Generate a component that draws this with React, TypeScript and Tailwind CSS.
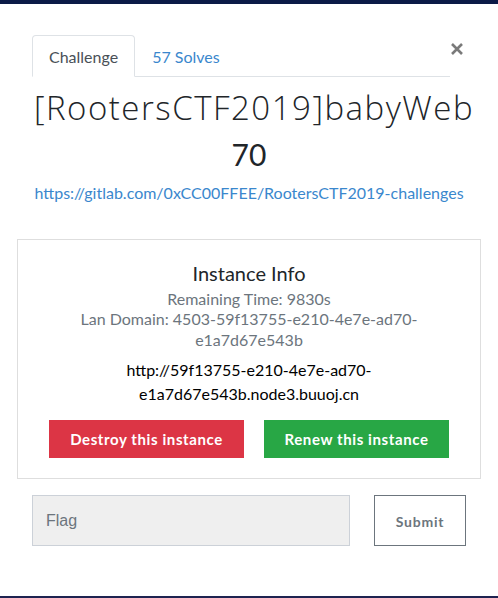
export default function App() {
  return (
    <div className="flex h-[598px] w-[498px] flex-col overflow-hidden bg-white font-['Lato',sans-serif] text-[#212529]">
      <div className="h-[4px] shrink-0 bg-[#0b1a47]" />
      <div className="flex-1 px-[32px] pt-[32px]">
        {/* tabs */}
        <div className="flex items-start">
          <div className="flex h-[41px] w-[420px] items-end border-b border-[#dee2e6]">
            <div className="-mb-px flex h-[42px] items-center rounded-t-[4px] border border-[#dee2e6] border-b-white bg-white px-[16px] pt-[2px] text-[16px] text-[#495057]">
              Challenge
            </div>
            <div className="flex h-[41px] items-center px-[17px] pt-[2px] text-[16px] text-[#3a87cd]">57 Solves</div>
          </div>
          <button className="ml-auto mt-[6px] mr-[2px] text-[#7a7a7a]">
            <svg width="14" height="14" viewBox="0 0 14 14">
              <path d="M2 2 L12 12 M12 2 L2 12" stroke="currentColor" strokeWidth="2.6" />
            </svg>
          </button>
        </div>

        <h1 className="-mx-[20px] mt-[10px] pl-[10px] text-center font-['Open_Sans',sans-serif] text-[33px] font-light leading-[42px] tracking-[1.5px] text-[#212529]">
          [RootersCTF2019]babyWeb
        </h1>
        <div className="mt-[5px] text-center text-[30px] leading-[40px]">70</div>
        <div className="-mx-[10px] mt-[7px] text-center text-[16px] leading-[24px]">
          <a className="text-[#3a87cd]">https://gitlab.com/0xCC00FFEE/RootersCTF2019-challenges</a>
        </div>
      </div>

      <div className="mx-[17px] mb-[16px] border border-[#dedede] px-[31px] pb-[20px] pt-[20px] text-center">
        <div className="text-[20px] leading-[26px]">Instance Info</div>
        <div className="mt-[3px] text-[16px] leading-[20.5px] text-[#6c757d]">
          <div>Remaining Time: 9830s</div>
          <div className="px-[20px]">Lan Domain: 4503-59f13755-e210-4e7e-ad70-e1a7d67e543b</div>
        </div>
        <div className="mt-[8px] px-[50px] text-[16px] leading-[24px] text-black">
          http://59f13755-e210-4e7e-ad70-e1a7d67e543b.node3.buuoj.cn
        </div>
        <div className="mt-[14px] flex justify-center gap-[20px]">
          <button className="h-[38px] w-[195px] bg-[#dc3545] text-[15px] font-bold tracking-[0.6px] text-white">
            Destroy this instance
          </button>
          <button className="h-[38px] w-[185px] bg-[#28a745] text-[15px] font-bold tracking-[0.6px] text-white">
            Renew this instance
          </button>
        </div>
      </div>

      <div className="flex px-[32px] pb-[50px]">
        <input
          placeholder="Flag"
          className="h-[51px] w-[318px] border border-[#ccd1d8] bg-[#efefef] px-[13px] font-['Liberation_Sans',sans-serif] text-[16px] placeholder:text-[#6c757d]"
        />
        <button className="ml-auto h-[51px] w-[92px] border border-[#6c757d] pt-[2px] text-[14px] font-bold tracking-[0.8px] text-[#6c757d]">
          Submit
        </button>
      </div>
      <div className="mt-auto h-[2px] shrink-0 bg-[#1e2350]" />
    </div>
  );
}
